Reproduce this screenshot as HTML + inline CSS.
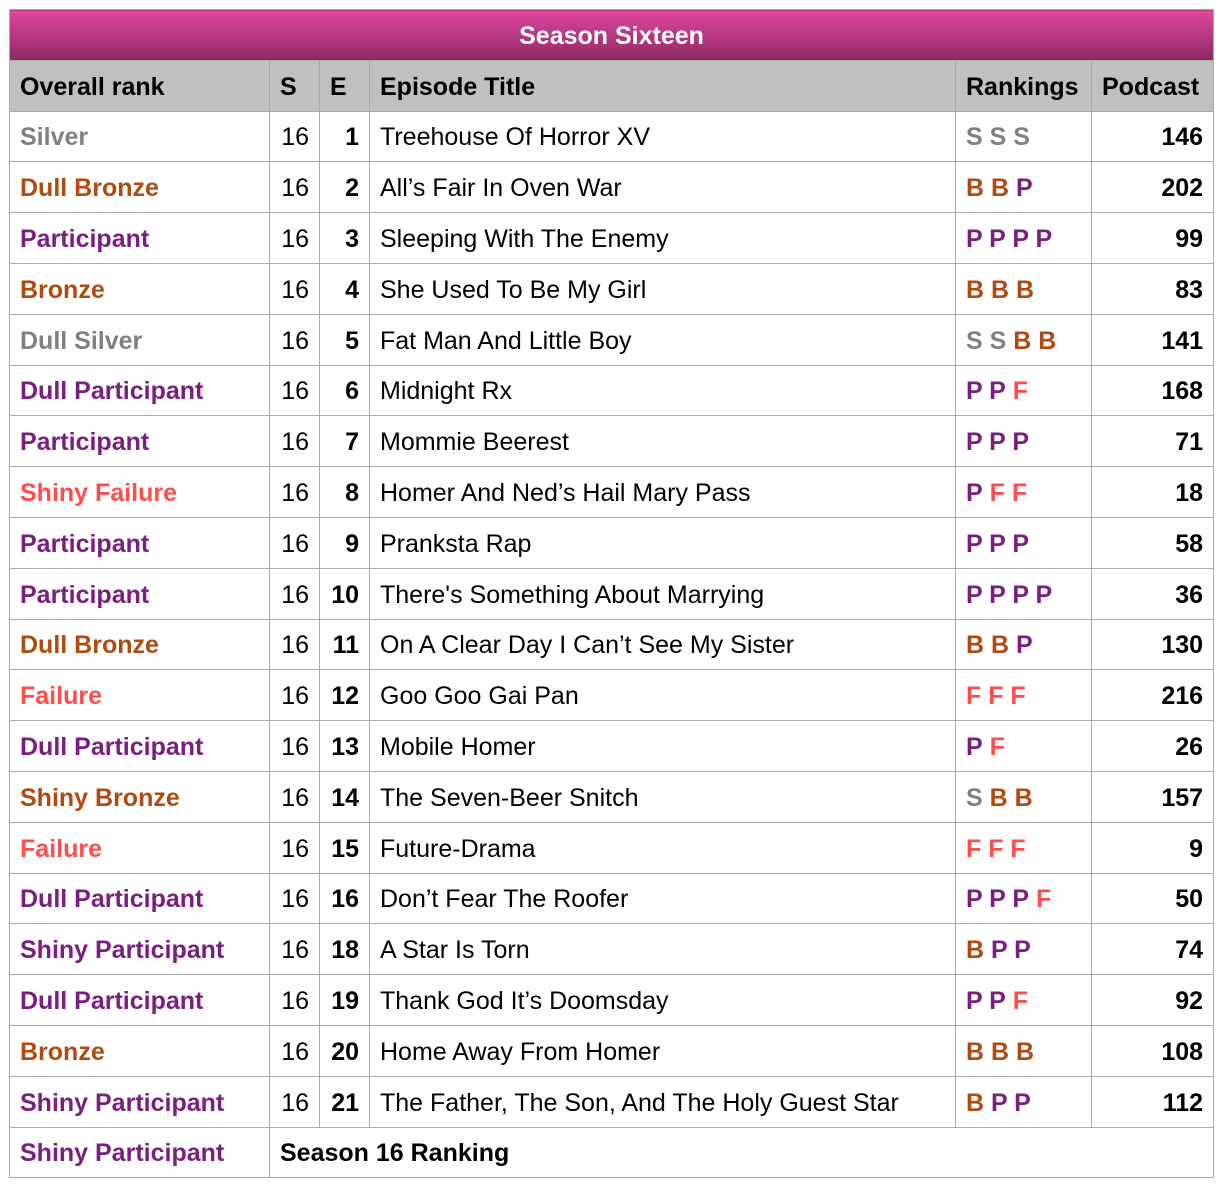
<!DOCTYPE html>
<html><head><meta charset="utf-8"><style>
body{margin:0;background:#fff;font-family:"Liberation Sans",Arial,sans-serif;}
table{position:absolute;left:9px;top:9px;border-collapse:collapse;width:1204px;table-layout:fixed;font-size:25px;}
td,th{border:1px solid #aaa;height:46.8px;padding:3px 10px 0 10px;white-space:nowrap;overflow:hidden;}
th{background:#c0c0c0;text-align:left;font-weight:bold;color:#000;}
.t{background:linear-gradient(#e0479f,#8c2963);color:#fff;text-align:center;}
.n{text-align:right}
.b{font-weight:bold}
.S{color:#808080;font-weight:bold}.B{color:#b04a10;font-weight:bold}.P{color:#7a1e80;font-weight:bold}.F{color:#ff4d4d;font-weight:bold}
</style></head><body>
<table>
<colgroup><col style="width:260px"><col style="width:50px"><col style="width:50px"><col style="width:586px"><col style="width:136px"><col style="width:122px"></colgroup>
<tr><th colspan="6" class="t">Season Sixteen</th></tr>
<tr><th>Overall rank</th><th>S</th><th>E</th><th>Episode Title</th><th>Rankings</th><th>Podcast</th></tr>
<tr><td class="S">Silver</td><td class="n">16</td><td class="n b">1</td><td>Treehouse Of Horror XV</td><td><span class="S">S S S</span></td><td class="n b">146</td></tr>
<tr><td class="B">Dull Bronze</td><td class="n">16</td><td class="n b">2</td><td>All’s Fair In Oven War</td><td><span class="B">B B</span> <span class="P">P</span></td><td class="n b">202</td></tr>
<tr><td class="P">Participant</td><td class="n">16</td><td class="n b">3</td><td>Sleeping With The Enemy</td><td><span class="P">P P P P</span></td><td class="n b">99</td></tr>
<tr><td class="B">Bronze</td><td class="n">16</td><td class="n b">4</td><td>She Used To Be My Girl</td><td><span class="B">B B B</span></td><td class="n b">83</td></tr>
<tr><td class="S">Dull Silver</td><td class="n">16</td><td class="n b">5</td><td>Fat Man And Little Boy</td><td><span class="S">S S</span> <span class="B">B B</span></td><td class="n b">141</td></tr>
<tr><td class="P">Dull Participant</td><td class="n">16</td><td class="n b">6</td><td>Midnight Rx</td><td><span class="P">P P</span> <span class="F">F</span></td><td class="n b">168</td></tr>
<tr><td class="P">Participant</td><td class="n">16</td><td class="n b">7</td><td>Mommie Beerest</td><td><span class="P">P P P</span></td><td class="n b">71</td></tr>
<tr><td class="F">Shiny Failure</td><td class="n">16</td><td class="n b">8</td><td>Homer And Ned’s Hail Mary Pass</td><td><span class="P">P</span> <span class="F">F F</span></td><td class="n b">18</td></tr>
<tr><td class="P">Participant</td><td class="n">16</td><td class="n b">9</td><td>Pranksta Rap</td><td><span class="P">P P P</span></td><td class="n b">58</td></tr>
<tr><td class="P">Participant</td><td class="n">16</td><td class="n b">10</td><td>There's Something About Marrying</td><td><span class="P">P P P P</span></td><td class="n b">36</td></tr>
<tr><td class="B">Dull Bronze</td><td class="n">16</td><td class="n b">11</td><td>On A Clear Day I Can’t See My Sister</td><td><span class="B">B B</span> <span class="P">P</span></td><td class="n b">130</td></tr>
<tr><td class="F">Failure</td><td class="n">16</td><td class="n b">12</td><td>Goo Goo Gai Pan</td><td><span class="F">F F F</span></td><td class="n b">216</td></tr>
<tr><td class="P">Dull Participant</td><td class="n">16</td><td class="n b">13</td><td>Mobile Homer</td><td><span class="P">P</span> <span class="F">F</span></td><td class="n b">26</td></tr>
<tr><td class="B">Shiny Bronze</td><td class="n">16</td><td class="n b">14</td><td>The Seven-Beer Snitch</td><td><span class="S">S</span> <span class="B">B B</span></td><td class="n b">157</td></tr>
<tr><td class="F">Failure</td><td class="n">16</td><td class="n b">15</td><td>Future-Drama</td><td><span class="F">F F F</span></td><td class="n b">9</td></tr>
<tr><td class="P">Dull Participant</td><td class="n">16</td><td class="n b">16</td><td>Don’t Fear The Roofer</td><td><span class="P">P P P</span> <span class="F">F</span></td><td class="n b">50</td></tr>
<tr><td class="P">Shiny Participant</td><td class="n">16</td><td class="n b">18</td><td>A Star Is Torn</td><td><span class="B">B</span> <span class="P">P P</span></td><td class="n b">74</td></tr>
<tr><td class="P">Dull Participant</td><td class="n">16</td><td class="n b">19</td><td>Thank God It’s Doomsday</td><td><span class="P">P P</span> <span class="F">F</span></td><td class="n b">92</td></tr>
<tr><td class="B">Bronze</td><td class="n">16</td><td class="n b">20</td><td>Home Away From Homer</td><td><span class="B">B B B</span></td><td class="n b">108</td></tr>
<tr><td class="P">Shiny Participant</td><td class="n">16</td><td class="n b">21</td><td>The Father, The Son, And The Holy Guest Star</td><td><span class="B">B</span> <span class="P">P P</span></td><td class="n b">112</td></tr>
<tr><td class="P">Shiny Participant</td><td colspan="5" class="b">Season 16 Ranking</td></tr>
</table>
</body></html>
